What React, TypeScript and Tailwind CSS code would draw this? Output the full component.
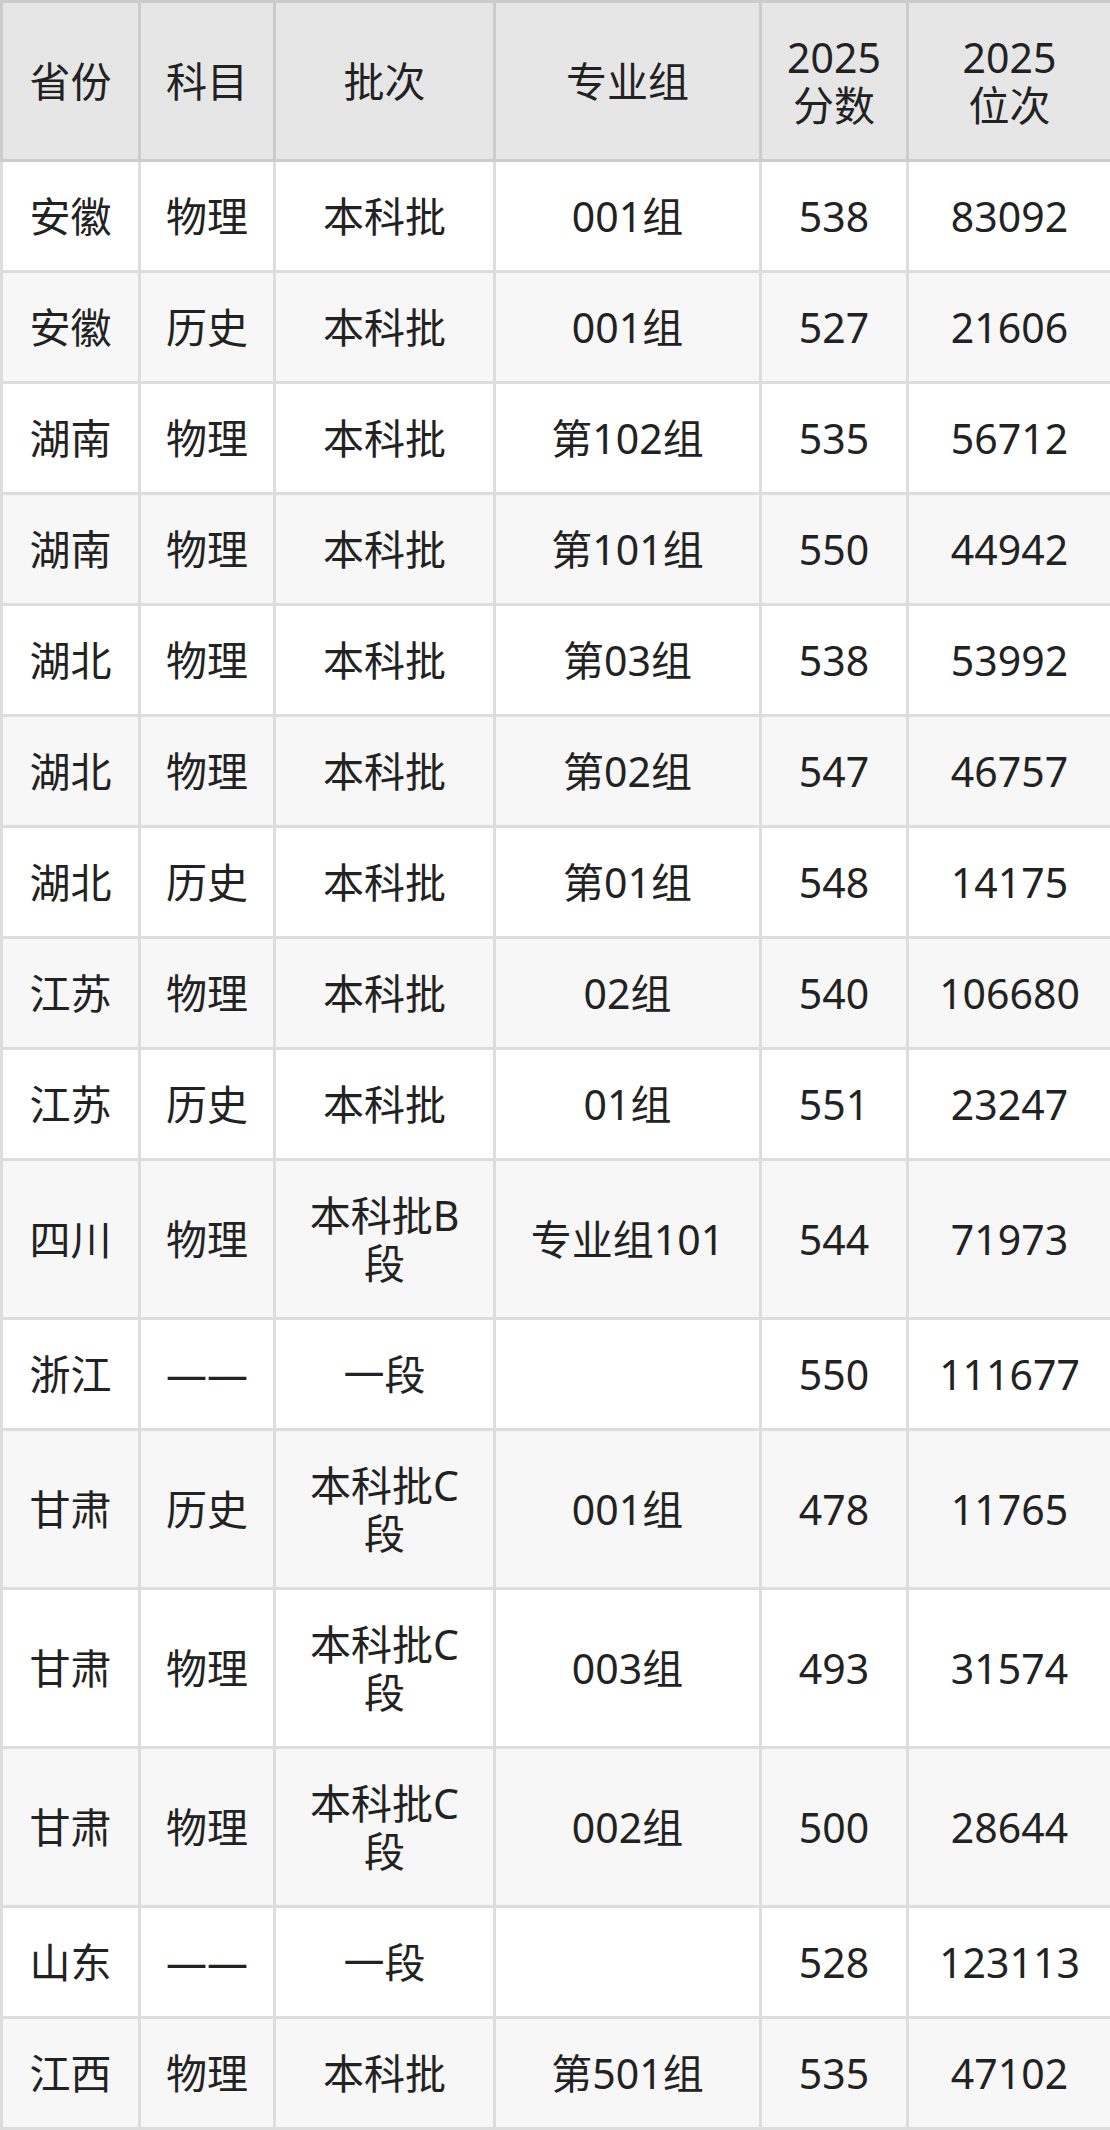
const rows: [string, string, string[], string, string, string][] = [
  ['安徽', '物理', ['本科批'], '001组', '538', '83092'],
  ['安徽', '历史', ['本科批'], '001组', '527', '21606'],
  ['湖南', '物理', ['本科批'], '第102组', '535', '56712'],
  ['湖南', '物理', ['本科批'], '第101组', '550', '44942'],
  ['湖北', '物理', ['本科批'], '第03组', '538', '53992'],
  ['湖北', '物理', ['本科批'], '第02组', '547', '46757'],
  ['湖北', '历史', ['本科批'], '第01组', '548', '14175'],
  ['江苏', '物理', ['本科批'], '02组', '540', '106680'],
  ['江苏', '历史', ['本科批'], '01组', '551', '23247'],
  ['四川', '物理', ['本科批B', '段'], '专业组101', '544', '71973'],
  ['浙江', '——', ['一段'], '', '550', '111677'],
  ['甘肃', '历史', ['本科批C', '段'], '001组', '478', '11765'],
  ['甘肃', '物理', ['本科批C', '段'], '003组', '493', '31574'],
  ['甘肃', '物理', ['本科批C', '段'], '002组', '500', '28644'],
  ['山东', '——', ['一段'], '', '528', '123113'],
  ['江西', '物理', ['本科批'], '第501组', '535', '47102'],
];

const th = 'border-[3px] border-[#cccccc] bg-[#e6e6e6] px-[8px] py-[30px] font-normal text-center align-middle whitespace-nowrap';
const td = 'border-[3px] border-[#dddddd] px-[8px] py-[30px] text-center align-middle whitespace-nowrap';

export default function App() {
  return (
    <div className="w-[1110px] bg-white text-[#222222] text-[41px] leading-[48px] [font-family:'Noto_Sans','Noto_Sans_CJK_SC',sans-serif]">
      <table className="w-[1110px] table-fixed border-collapse">
        <colgroup>
          <col className="w-[138px]" />
          <col className="w-[135px]" />
          <col className="w-[220px]" />
          <col className="w-[266px]" />
          <col className="w-[147px]" />
          <col className="w-[204px]" />
        </colgroup>
        <thead>
          <tr>
            <th className={th}>省份</th>
            <th className={th}>科目</th>
            <th className={th}>批次</th>
            <th className={th}>专业组</th>
            <th className={th}>
              2025
              <br />
              分数
            </th>
            <th className={th}>
              2025
              <br />
              位次
            </th>
          </tr>
        </thead>
        <tbody>
          {rows.map((r, i) => (
            <tr key={i} className={i % 2 === 1 ? 'bg-[#f7f7f7]' : 'bg-white'}>
              <td className={td}>{r[0]}</td>
              <td className={td}>{r[1]}</td>
              <td className={td}>
                {r[2].map((line, k) => (
                  <span key={k} className="block">
                    {line}
                  </span>
                ))}
              </td>
              <td className={td}>{r[3]}</td>
              <td className={td}>{r[4]}</td>
              <td className={td}>{r[5]}</td>
            </tr>
          ))}
        </tbody>
      </table>
    </div>
  );
}
